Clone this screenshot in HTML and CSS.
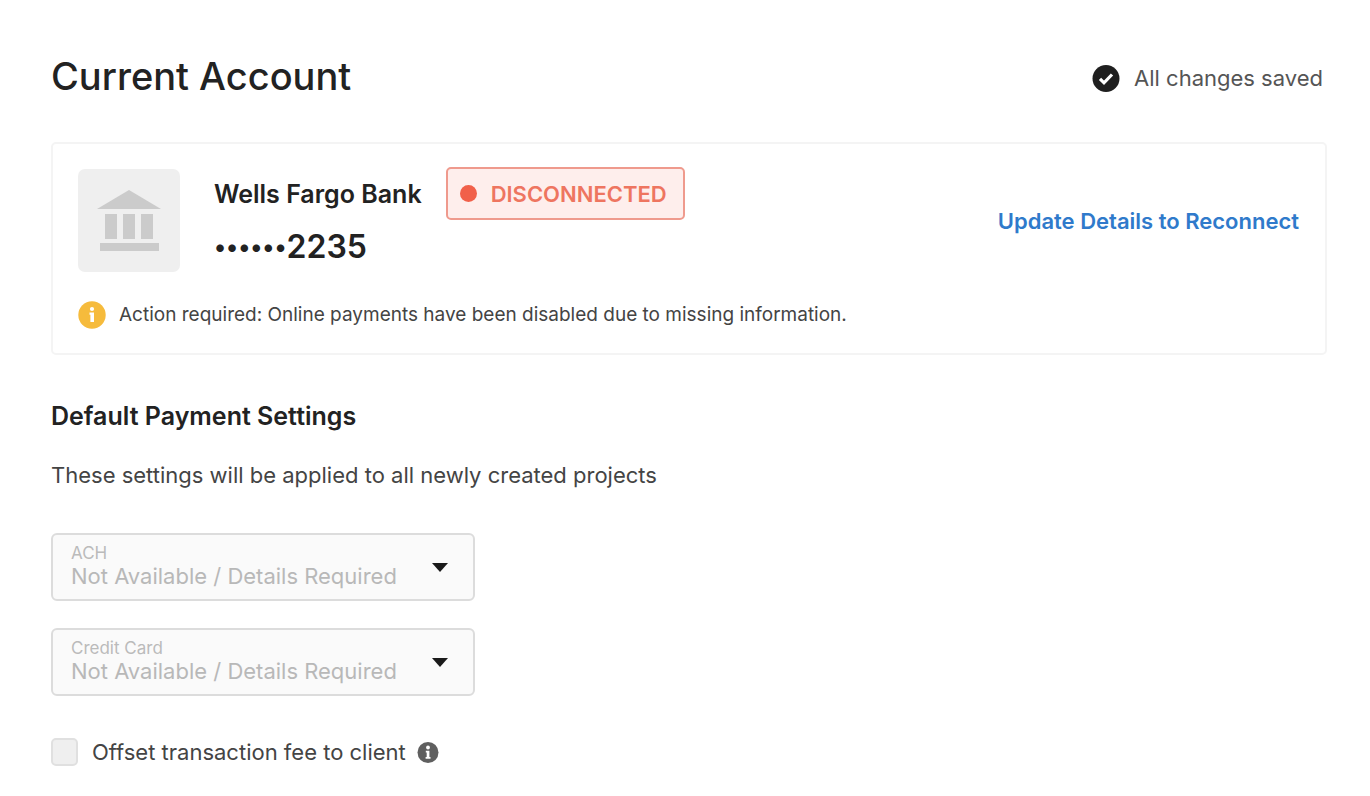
FILE: index.html
```html
<!DOCTYPE html>
<html lang="en">
<head>
    <meta charset="UTF-8">
    <meta name="viewport" content="width=device-width, initial-scale=1.0">
    <title>Current Account</title>
    <link rel="stylesheet" href="styles.css">
</head>
<body>
    <main class="page">
        <header class="page-header">
            <h1>Current Account</h1>
            <div class="save-status">
                <svg width="28" height="28" viewBox="0 0 28 28" aria-hidden="true">
                    <circle cx="14" cy="14.5" r="13.5" fill="#1f1f1f"/>
                    <path d="M8 14.8l4 4 8-8.3" fill="none" stroke="#fff" stroke-width="3.2"/>
                </svg>
                <span>All changes saved</span>
            </div>
        </header>

        <section class="account-card">
            <div class="account-row">
                <div class="bank-logo">
                    <svg width="66" height="62" viewBox="0 0 66 62" fill="#cbcbcb" aria-hidden="true">
                        <path d="M33 0L65 19H1z"/>
                        <path d="M9 24h12v25H9zM27 24h12v25H27zM45 24h12v25H45z"/>
                        <path d="M4 53h59v8H4z"/>
                    </svg>
                </div>
                <div class="account-info">
                    <div class="bank-line">
                        <span class="bank-name">Wells Fargo Bank</span>
                        <span class="badge"><span class="badge-dot"></span>DISCONNECTED</span>
                    </div>
                    <div class="account-number">
                        <span class="mask">••••••</span><span>2235</span>
                    </div>
                </div>
                <a class="reconnect-link" href="#">Update Details to Reconnect</a>
            </div>
            <div class="alert">
                <svg width="28" height="28" viewBox="0 0 28 28" aria-hidden="true">
                    <circle cx="14" cy="14" r="13.7" fill="#f6bb3c"/>
                    <circle cx="14" cy="8" r="2.1" fill="#fff"/>
                    <path d="M11.5 11.5H16v9.5h-3.6v-7.2h-.9z" fill="#fff"/>
                </svg>
                <span>Action required: Online payments have been disabled due to missing information.</span>
            </div>
        </section>

        <section class="settings">
            <h2>Default Payment Settings</h2>
            <p>These settings will be applied to all newly created projects</p>

            <div class="field">
                <label for="ach">ACH</label>
                <select id="ach" disabled>
                    <option>Not Available / Details Required</option>
                </select>
                <svg class="arrow" width="16" height="9" viewBox="0 0 16 9" aria-hidden="true"><path d="M0 0h16L8 9z" fill="#1a1a1a"/></svg>
            </div>

            <div class="field">
                <label for="credit-card">Credit Card</label>
                <select id="credit-card" disabled>
                    <option>Not Available / Details Required</option>
                </select>
                <svg class="arrow" width="16" height="9" viewBox="0 0 16 9" aria-hidden="true"><path d="M0 0h16L8 9z" fill="#1a1a1a"/></svg>
            </div>

            <div class="offset-row">
                <input type="checkbox" id="offset-fee" disabled>
                <label for="offset-fee">Offset transaction fee to client</label>
                <svg width="22" height="22" viewBox="0 0 22 22" aria-hidden="true">
                    <circle cx="11" cy="11.5" r="10.5" fill="#5f5f5f"/>
                    <circle cx="11" cy="6.5" r="1.9" fill="#fff"/>
                    <path d="M8.8 9.7h3.6v6.2h1.1v1.8H8.6v-1.8h1.1v-4.4h-.9z" fill="#fff"/>
                </svg>
            </div>
        </section>
    </main>
</body>
</html>
```
FILE: styles.css
```css
* {
    box-sizing: border-box;
}

body {
    margin: 0;
    background-color: #fff;
    color: #222;
    font-family: Inter, "Liberation Sans", sans-serif;
    font-size: 22px;
    line-height: 28px;
}

h1, h2, p {
    margin: 0;
}

svg {
    display: block;
    flex-shrink: 0;
}

.page {
    padding: 50px 43px 28px 51px;
}

.page-header {
    display: flex;
    justify-content: space-between;
    align-items: flex-start;
    margin-bottom: 40px;
}

h1 {
    font-size: 38px;
    font-weight: 500;
    line-height: 52px;
}

.save-status {
    display: flex;
    align-items: center;
    gap: 14px;
    padding: 14px 4px 0 0;
    color: #555;
}

/* Account card */
.account-card {
    padding: 23px 26px 24px 25px;
    border: 2px solid #f4f4f4;
    border-radius: 5px;
}

.account-row {
    display: flex;
    align-items: center;
    margin-bottom: 27px;
}

.bank-logo {
    display: flex;
    justify-content: center;
    align-items: center;
    width: 102px;
    height: 103px;
    margin-right: 34px;
    border-radius: 7px;
    background-color: #efefef;
}

.account-info {
    flex: 1;
}

.bank-line {
    display: flex;
    align-items: center;
    gap: 24px;
}

.bank-name {
    font-size: 25px;
    font-weight: 600;
}

.badge {
    display: flex;
    align-items: center;
    gap: 14px;
    height: 53px;
    padding: 0 16px 0 12px;
    border: 2px solid #ef9a8d;
    border-radius: 5px;
    background-color: #feeeec;
    color: #ee7560;
    font-weight: 600;
}

.badge-dot {
    width: 17px;
    height: 17px;
    border-radius: 50%;
    background-color: #f1604a;
}

.account-number {
    display: flex;
    align-items: center;
    font-size: 32px;
    font-weight: 600;
    line-height: 54px;
}

.mask {
    font-size: 24px;
}

.reconnect-link {
    color: #2f7acb;
    font-weight: 600;
    text-decoration: none;
}

.alert {
    display: flex;
    align-items: center;
    gap: 13px;
    color: #444;
    font-size: 19px;
}

/* Payment settings */
.settings {
    padding-top: 45px;
}

h2 {
    margin-bottom: 29px;
    font-size: 25px;
    font-weight: 600;
    line-height: 32px;
}

.settings p {
    margin-bottom: 44px;
    color: #444;
}

.field {
    position: relative;
    max-width: 424px;
    margin-bottom: 27px;
}

.field label {
    position: absolute;
    top: 9px;
    left: 20px;
    color: #bbb;
    font-size: 17px;
    line-height: 22px;
}

.field select {
    display: block;
    width: 100%;
    height: 68px;
    padding: 18px 70px 0 18px;
    border: 2px solid #dcdcdc;
    border-radius: 6px;
    background-color: #fafafa;
    color: #b8b8b8;
    font: inherit;
    opacity: 1;
    appearance: none;
}

.arrow {
    position: absolute;
    top: 30px;
    right: 27px;
    pointer-events: none;
}

.offset-row {
    display: flex;
    align-items: center;
    padding-top: 15px;
    color: #444;
}

.offset-row input {
    width: 27px;
    height: 28px;
    margin: 0 14px 0 0;
    border: 2px solid #e0e0e0;
    border-radius: 5px;
    background-color: #efefef;
    appearance: none;
}

.offset-row label {
    margin-right: 11px;
}
```
